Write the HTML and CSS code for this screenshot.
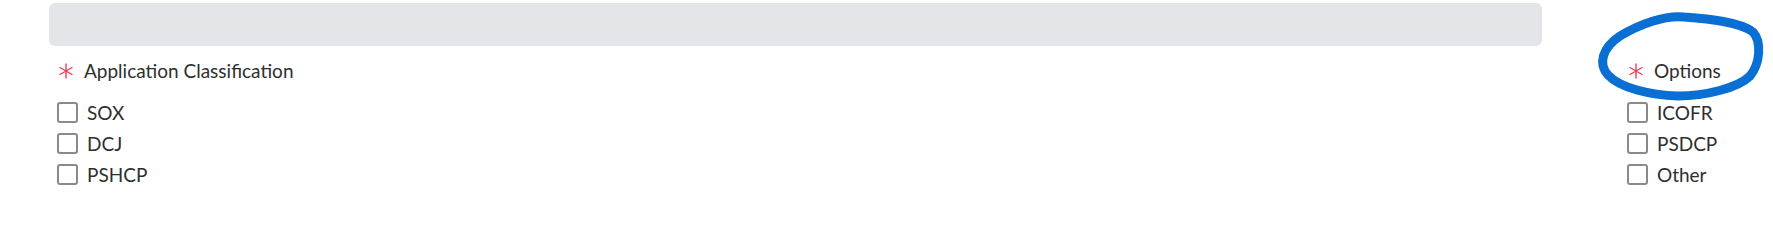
FILE: index.html
```html
<!DOCTYPE html>
<html lang="en">
<head>
<meta charset="utf-8">
<title>Form</title>
<link rel="stylesheet" href="styles.css">
</head>
<body>
<div class="page">
  <div class="bar"></div>
  <div class="fields">
    <div class="group group-main">
      <div class="label">
        <svg class="req" viewBox="0 0 16 16" width="16" height="16" aria-hidden="true"><path d="M8 0.5V15.5M1.5 4.25L14.5 11.75M14.5 4.25L1.5 11.75" stroke="#e8405c" stroke-width="1.4" fill="none"/></svg>
        <span>Application Classification</span>
      </div>
      <ul class="checks">
        <li><span class="box"></span>SOX</li>
        <li><span class="box"></span>DCJ</li>
        <li><span class="box"></span>PSHCP</li>
      </ul>
    </div>
    <div class="group group-side">
      <div class="label">
        <svg class="req" viewBox="0 0 16 16" width="16" height="16" aria-hidden="true"><path d="M8 0.5V15.5M1.5 4.25L14.5 11.75M14.5 4.25L1.5 11.75" stroke="#e8405c" stroke-width="1.4" fill="none"/></svg>
        <span>Options</span>
      </div>
      <ul class="checks">
        <li><span class="box"></span>ICOFR</li>
        <li><span class="box"></span>PSDCP</li>
        <li><span class="box"></span>Other</li>
      </ul>
      <svg class="scribble" viewBox="0 0 180 105" width="180" height="105" aria-hidden="true">
        <path d="M 30 28 C 50 16, 75 7, 94 9 C 120 11, 150 14, 163 24 C 172 34, 170 56, 160 68 C 148 80, 115 88, 88 88 C 60 87, 30 80, 18 67 C 8 56, 12 40, 30 28" fill="none" stroke="#0a6fd2" stroke-width="9" stroke-linecap="round" stroke-linejoin="round"/>
      </svg>
    </div>
  </div>
</div>
</body>
</html>
```
FILE: styles.css
```css
html, body {
  margin: 0;
  padding: 0;
  background: #ffffff;
}
body {
  font-family: Lato, "Open Sans", "Liberation Sans", sans-serif;
  color: #2e2e2e;
  width: 1773px;
  height: 230px;
  overflow: hidden;
}
.page {
  padding: 3px 0 0 49px;
}
.bar {
  width: 1493px;
  height: 43px;
  background: #e4e5e8;
  border-radius: 6px;
}
.fields {
  display: flex;
  justify-content: space-between;
  padding: 0 16px 0 8px;
  margin-top: 14px;
}
.group {
  display: flex;
  flex-direction: column;
}
.group-side {
  position: relative;
  width: 130px;
}
.label {
  display: flex;
  align-items: center;
  gap: 10px;
  font-size: 19px;
  line-height: 22px;
  height: 22px;
}
.req {
  flex: none;
  margin-left: 1px;
}
.checks {
  list-style: none;
  margin: 20px 0 0 0;
  padding: 0;
  display: flex;
  flex-direction: column;
  gap: 10px;
}
.checks li {
  display: flex;
  align-items: center;
  gap: 9px;
  font-size: 19px;
  height: 21px;
}
.box {
  width: 17px;
  height: 17px;
  border: 2px solid #8a8a8e;
  border-radius: 3px;
  box-sizing: content-box;
  flex: none;
}
.scribble {
  position: absolute;
  left: -37px;
  top: -52px;
  pointer-events: none;
}
```
